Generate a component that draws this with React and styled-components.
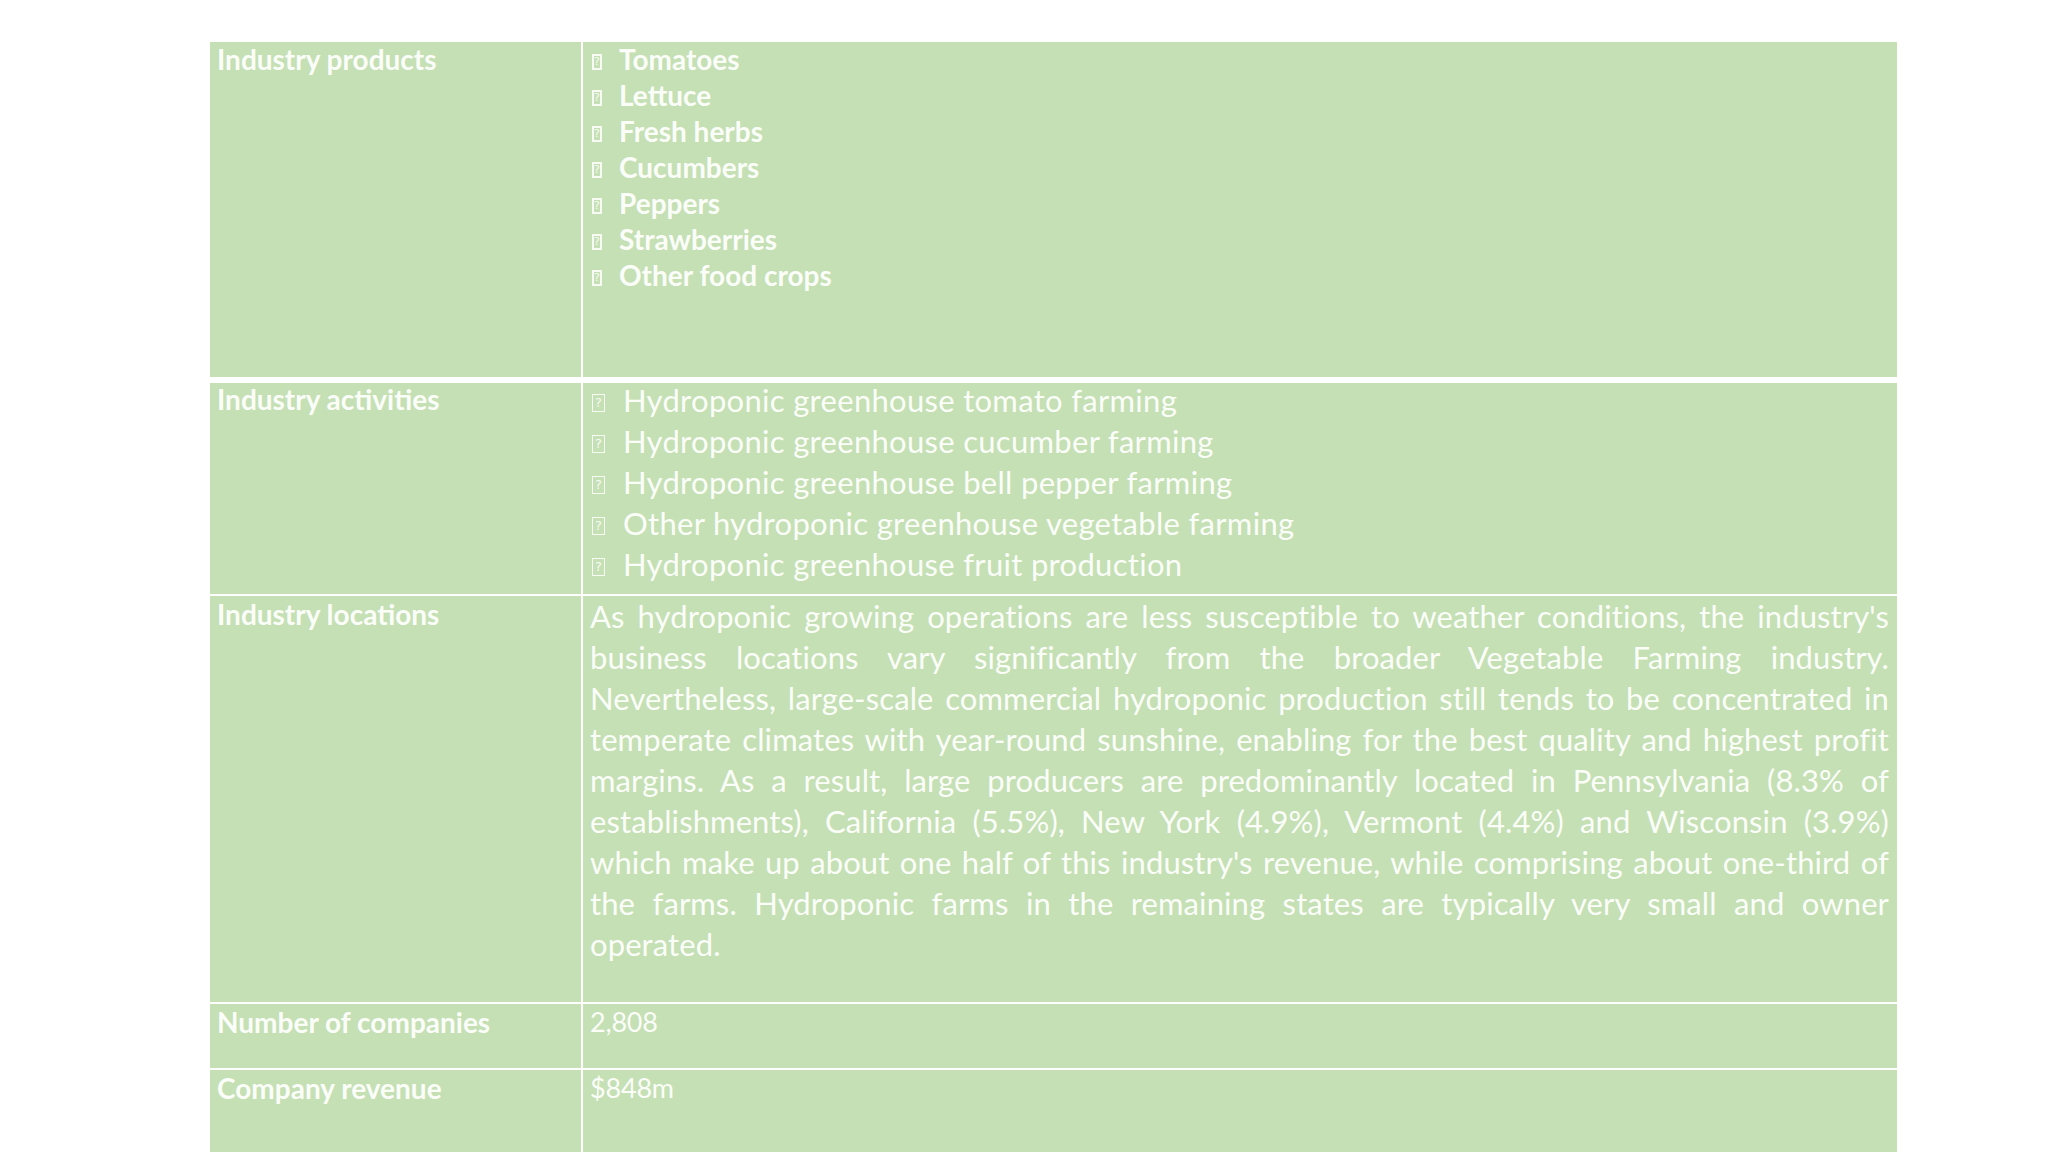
import React from "react";
import styled, { createGlobalStyle } from "styled-components";

// Table contents, copied from the slide
const products = [
  "Tomatoes",
  "Lettuce",
  "Fresh herbs",
  "Cucumbers",
  "Peppers",
  "Strawberries",
  "Other food crops",
];

const activities = [
  "Hydroponic greenhouse tomato farming",
  "Hydroponic greenhouse cucumber farming",
  "Hydroponic greenhouse bell pepper farming",
  "Other hydroponic greenhouse vegetable farming",
  "Hydroponic greenhouse fruit production",
];

// line breaks kept as in the slide so the justified block lines up
const locationLines = [
  "As hydroponic growing operations are less susceptible to weather conditions, the industry's",
  "business locations vary significantly from the broader Vegetable Farming industry.",
  "Nevertheless, large-scale commercial hydroponic production still tends to be concentrated in",
  "temperate climates with year-round sunshine, enabling for the best quality and highest profit",
  "margins. As a result, large producers are predominantly located in Pennsylvania (8.3% of",
  "establishments), California (5.5%), New York (4.9%), Vermont (4.4%) and Wisconsin (3.9%)",
  "which make up about one half of this industry's revenue, while comprising about one-third of",
  "the farms. Hydroponic farms in the remaining states are typically very small and owner",
  "operated.",
];

const GlobalStyle = createGlobalStyle`
  html, body {
    margin: 0;
    padding: 0;
    background: #ffffff;
    height: 1152px;
    overflow: hidden;
  }
  body {
    font-family: Lato, "Open Sans", sans-serif;
    color: #fbfdf9;
  }
`;

const Page = styled.div`
  padding: 42px 0 0 210px;
`;

const Table = styled.div`
  width: 1687px;
  display: flex;
  flex-direction: column;
`;

const Row = styled.div`
  display: grid;
  grid-template-columns: 371px 1fr;
  column-gap: 2px;
  height: ${(p) => p.$height}px;
  border-top: ${(p) => p.$sep || 0}px solid #ffffff;
`;

const Cell = styled.div`
  background: #c5e0b4;
  padding: 0 8px 0 7px;
`;

const Label = styled.div`
  font-weight: 700;
  font-size: 28px;
  line-height: 36px;
  position: relative;
  top: ${(p) => p.$shift || 0}px;
`;

const Value = styled.div`
  font-size: 27px;
  line-height: 36px;
  letter-spacing: -0.2px;
`;

const BulletList = styled.ul`
  list-style: none;
  margin: 0;
  padding: 0;
  position: relative;
  top: ${(p) => p.$shift || 0}px;
`;

const BulletItem = styled.li`
  font-weight: ${(p) => (p.$bold ? 700 : 400)};
  font-size: ${(p) => p.$size}px;
  line-height: ${(p) => p.$line}px;
  letter-spacing: ${(p) => p.$track}px;
  white-space: nowrap;
`;

// the missing-glyph box PowerPoint shows for the Wingdings bullet
const Tofu = styled.span`
  display: inline-block;
  vertical-align: baseline;
  overflow: hidden;
  box-sizing: border-box;
  width: ${(p) => p.$w}px;
  height: ${(p) => p.$h}px;
  margin: 0 ${(p) => p.$gap}px 0 2px;
  border: ${(p) => p.$stroke}px solid #f7fbf4;
  color: #f7fbf4;
  font-family: "DejaVu Sans", sans-serif;
  font-size: ${(p) => p.$h - 5}px;
  line-height: ${(p) => p.$h - 2 * p.$stroke}px;
  font-weight: 400;
  letter-spacing: 0;
  text-align: center;
`;

const Paragraph = styled.div`
  font-size: 31px;
  line-height: 41px;
  letter-spacing: 0.1px;
`;

const JustifiedLine = styled.div`
  text-align: ${(p) => (p.$last ? "left" : "justify")};
  text-align-last: ${(p) => (p.$last ? "left" : "justify")};
`;

export default function App() {
  return (
    <>
      <GlobalStyle />
      <Page>
        <Table>
          <Row $height={335}>
            <Cell>
              <Label $shift={-1}>Industry products</Label>
            </Cell>
            <Cell>
              <BulletList $shift={-1}>
                {products.map((item) => (
                  <BulletItem key={item} $bold $size={28} $line={36} $track={0}>
                    <Tofu $w={10} $h={16} $gap={17} $stroke={2}>?</Tofu>
                    {item}
                  </BulletItem>
                ))}
              </BulletList>
            </Cell>
          </Row>

          <Row $height={211} $sep={6}>
            <Cell>
              <Label $shift={-2}>Industry activities</Label>
            </Cell>
            <Cell>
              <BulletList $shift={-3}>
                {activities.map((item) => (
                  <BulletItem key={item} $size={31} $line={41} $track={0.3}>
                    <Tofu $w={13} $h={18} $gap={18} $stroke={1.5}>?</Tofu>
                    {item}
                  </BulletItem>
                ))}
              </BulletList>
            </Cell>
          </Row>

          <Row $height={406} $sep={2}>
            <Cell>
              <Label>Industry locations</Label>
            </Cell>
            <Cell>
              <Paragraph>
                {locationLines.map((line, i) => (
                  <JustifiedLine key={i} $last={i === locationLines.length - 1}>
                    {line}
                  </JustifiedLine>
                ))}
              </Paragraph>
            </Cell>
          </Row>

          <Row $height={64} $sep={2}>
            <Cell>
              <Label>Number of companies</Label>
            </Cell>
            <Cell>
              <Value>2,808</Value>
            </Cell>
          </Row>

          <Row $height={82} $sep={2}>
            <Cell>
              <Label>Company revenue</Label>
            </Cell>
            <Cell>
              <Value>$848m</Value>
            </Cell>
          </Row>
        </Table>
      </Page>
    </>
  );
}
